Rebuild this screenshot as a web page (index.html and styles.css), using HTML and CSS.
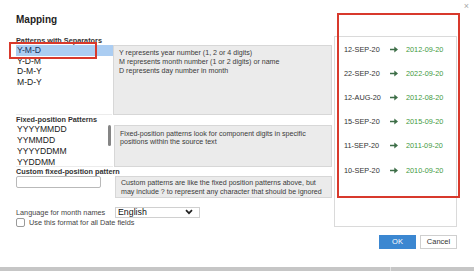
FILE: index.html
```html
<!DOCTYPE html>
<html>
<head>
<meta charset="utf-8">
<title>Mapping</title>
<link rel="stylesheet" href="styles.css">
</head>
<body>
<div class="dialog">
  <div class="title">Mapping</div>
  <div class="body">
    <div class="left">
      <div class="label l1">Patterns with Separators</div>
      <div class="row r1">
        <div class="list">
          <div class="item selected">Y-M-D</div>
          <div class="item">Y-D-M</div>
          <div class="item">D-M-Y</div>
          <div class="item">M-D-Y</div>
        </div>
        <div class="desc d1">Y represents year number (1, 2 or 4 digits)<br>M represents month number (1 or 2 digits) or name<br>D represents day number in month</div>
      </div>
      <div class="label l2">Fixed-position Patterns</div>
      <div class="row r2">
        <div class="list list-scroll">
          <div class="items">
            <div class="item fx">YYYYMMDD</div>
            <div class="item fx">YYMMDD</div>
            <div class="item fx">YYYYDDMM</div>
            <div class="item fx">YYDDMM</div>
          </div>
          <div class="track"><div class="thumb"></div></div>
        </div>
        <div class="desc d2">Fixed-position patterns look for component digits in specific<br>positions within the source text</div>
      </div>
      <div class="label l3">Custom fixed-position pattern</div>
      <div class="row r3">
        <div class="input"></div>
        <div class="desc d3">Custom patterns are like the fixed position patterns above, but<br>may include ? to represent any character that should be ignored</div>
      </div>
      <div class="lang">
        <span class="lang-label">Language for month names</span>
        <div class="select"><span>English</span>
          <svg class="chev" width="8" height="6" viewBox="0 0 8 6"><polyline points="1,1.2 4,4.2 7,1.2" fill="none" stroke="#222" stroke-width="1.7"/></svg>
        </div>
      </div>
      <div class="check">
        <span class="box"></span><span>Use this format for all Date fields</span>
      </div>
    </div>
    <div class="preview">
      <div class="prow"><span class="src">12-SEP-20</span><svg class="arrow" width="8" height="7" viewBox="0 0 8 7"><path d="M0 2.7h4.3V0.6L8 3.5 4.3 6.4V4.3H0z" fill="#3d6e47"/></svg><span class="dst">2012-09-20</span></div>
      <div class="prow"><span class="src">22-SEP-20</span><svg class="arrow" width="8" height="7" viewBox="0 0 8 7"><path d="M0 2.7h4.3V0.6L8 3.5 4.3 6.4V4.3H0z" fill="#3d6e47"/></svg><span class="dst">2022-09-20</span></div>
      <div class="prow"><span class="src">12-AUG-20</span><svg class="arrow" width="8" height="7" viewBox="0 0 8 7"><path d="M0 2.7h4.3V0.6L8 3.5 4.3 6.4V4.3H0z" fill="#3d6e47"/></svg><span class="dst">2012-08-20</span></div>
      <div class="prow"><span class="src">15-SEP-20</span><svg class="arrow" width="8" height="7" viewBox="0 0 8 7"><path d="M0 2.7h4.3V0.6L8 3.5 4.3 6.4V4.3H0z" fill="#3d6e47"/></svg><span class="dst">2015-09-20</span></div>
      <div class="prow"><span class="src">11-SEP-20</span><svg class="arrow" width="8" height="7" viewBox="0 0 8 7"><path d="M0 2.7h4.3V0.6L8 3.5 4.3 6.4V4.3H0z" fill="#3d6e47"/></svg><span class="dst">2011-09-20</span></div>
      <div class="prow"><span class="src">10-SEP-20</span><svg class="arrow" width="8" height="7" viewBox="0 0 8 7"><path d="M0 2.7h4.3V0.6L8 3.5 4.3 6.4V4.3H0z" fill="#3d6e47"/></svg><span class="dst">2010-09-20</span></div>
    </div>
  </div>
  <div class="footer">
    <div class="btn ok">OK</div>
    <div class="btn cancel">Cancel</div>
  </div>
</div>
<div class="bar"><div class="bar-left"></div><div class="bar-sep"></div><div class="bar-right"></div></div>
<div class="close">×</div>
<div class="mark mark-pattern"></div>
<div class="mark mark-preview"></div>
</body>
</html>
```
FILE: styles.css
```css
html, body {
  margin: 0;
  padding: 0;
}
body {
  width: 474px;
  height: 271px;
  overflow: hidden;
  position: relative;
  background: #ffffff;
  font-family: "Liberation Sans", Arial, Helvetica, sans-serif;
  color: #222;
}
.dialog {
  height: 267px;
  padding: 0 17px 0 16px;
  display: flex;
  flex-direction: column;
}
.title {
  height: 36px;
  box-sizing: border-box;
  padding-top: 14px;
  font-size: 10px;
  line-height: 12px;
  font-weight: bold;
  color: #1e1e1e;
}
.body {
  display: flex;
  gap: 2px;
  height: 191px;
}
.left {
  width: 316px;
  display: flex;
  flex-direction: column;
}
.label {
  font-size: 7.3px;
  font-weight: bold;
  color: #333;
  white-space: nowrap;
}
.l1 { height: 9px; line-height: 9px; }
.l2 { height: 10px; line-height: 10px; }
.l3 { height: 9px; line-height: 9px; }
.row {
  display: flex;
  gap: 1px;
}
.r1 { height: 78px; }
.r2 { height: 42px; }
.r3 { height: 24px; gap: 14px; }
.list {
  width: 96px;
  box-sizing: border-box;
  background: #fff;
  border-bottom: 1px solid #ececec;
}
.item {
  font-size: 8.6px;
  line-height: 10.4px;
  height: 10.4px;
  padding-left: 1px;
  color: #1b1b1b;
  white-space: nowrap;
}
.item.selected {
  height: 11px;
  line-height: 11px;
  background: #abcdf2;
  color: #17335e;
  margin-right: -2px;
}
.list-scroll {
  display: flex;
  width: 97px;
}
.items {
  flex: 1;
  margin-top: -1px;
}
.item.fx {
  height: 11px;
  line-height: 11px;
}
.track {
  width: 4px;
  margin-right: 1px;
}
.thumb {
  width: 3px;
  height: 21px;
  border-radius: 2px;
  background: #858585;
}
.desc {
  flex: 1;
  box-sizing: border-box;
  background: #ebebeb;
  border: 1px solid #d7d7d7;
  font-size: 7.1px;
  line-height: 8.6px;
  color: #3a3a3a;
  padding: 3.4px 5px 0 5px;
  white-space: nowrap;
}
.d2 { padding-top: 3.4px; }
.d3 { padding-top: 1.8px; }
.input {
  width: 85px;
  height: 12px;
  box-sizing: border-box;
  border: 1px solid #b9b9b9;
  border-radius: 2px;
  background: #fff;
}
.lang {
  margin-top: 9px;
  height: 11px;
  display: flex;
  align-items: center;
}
.lang-label {
  width: 99px;
  font-size: 7.3px;
  color: #444;
  white-space: nowrap;
}
.select {
  width: 85px;
  height: 11px;
  box-sizing: border-box;
  border: 1px solid #d0d0d0;
  background: #fff;
  display: flex;
  align-items: center;
  justify-content: space-between;
  padding: 0 6px 0 2px;
  font-size: 8.8px;
  color: #111;
}
.check {
  height: 10px;
  display: flex;
  align-items: center;
  gap: 4px;
  font-size: 7.3px;
  color: #444;
  white-space: nowrap;
}
.box {
  width: 9px;
  height: 9px;
  box-sizing: border-box;
  border: 1px solid #9a9a9a;
  border-radius: 2px;
  background: #fff;
}
.preview {
  width: 123px;
  box-sizing: border-box;
  border: 1px solid #dadada;
  background: #fff;
}
.prow {
  height: 24.2px;
  display: flex;
  align-items: center;
  padding-left: 9px;
  font-size: 7.3px;
  white-space: nowrap;
}
.src {
  width: 46px;
  color: #333;
}
.arrow {
  margin-right: 8px;
}
.dst {
  color: #3f9a40;
}
.footer {
  height: 40px;
  box-sizing: border-box;
  padding-top: 8px;
  display: flex;
  justify-content: flex-end;
  gap: 4px;
}
.btn {
  width: 37px;
  height: 14px;
  box-sizing: border-box;
  font-size: 7.5px;
  line-height: 12px;
  text-align: center;
}
.ok {
  background: #3b87d1;
  color: #fff;
  border: 1px solid #3b87d1;
}
.cancel {
  background: #fff;
  color: #333;
  border: 1px solid #cfcfcf;
}
.bar {
  height: 4px;
  display: flex;
  background: #c6c6c6;
}
.bar-left { width: 390px; }
.bar-sep { width: 1px; background: #e2e2e2; }
.bar-right { flex: 1; }
.close {
  position: absolute;
  top: 1px;
  right: 5px;
  font-size: 9px;
  color: #a8a8a8;
}
.mark {
  position: absolute;
  border: 2px solid #d8392c;
  box-sizing: border-box;
}
.mark-pattern {
  left: 9px;
  top: 42px;
  width: 88px;
  height: 17px;
}
.mark-preview {
  left: 337px;
  top: 13px;
  width: 123px;
  height: 185px;
}
```
